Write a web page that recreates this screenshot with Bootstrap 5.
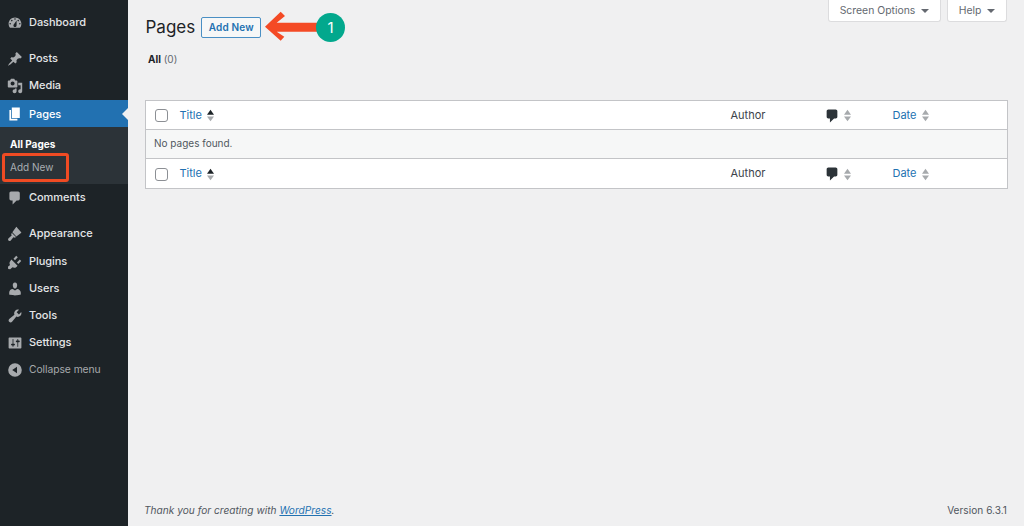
<!DOCTYPE html>
<html lang="en">
<head>
<meta charset="utf-8">
<title>Pages</title>
<link href="https://cdn.jsdelivr.net/npm/bootstrap@5.3.0/dist/css/bootstrap.min.css" rel="stylesheet">
<style>
html,body{height:100%;overflow:hidden}
body{background:#f0f0f1;color:#3c434a;font-family:Inter,"Liberation Sans",sans-serif;font-size:11px;width:1024px;height:526px;position:relative}
.wp-shell{height:526px}
.wp-side{width:128px;background:#1d2327;color:#f0f0f1;padding-top:9px;flex:none}
.wp-item{height:27px;padding-left:7px;gap:6px;color:#e4e6e7;font-size:11px;font-weight:500;letter-spacing:-.05px;position:relative}
.wp-item svg{width:16px;height:16px;flex:none;fill:#a7aaad}
.wp-gap{margin-top:9px}
.wp-gap1{margin-top:1px}
.wp-active{background:#2271b1;color:#fff;padding-top:1px}
.wp-active svg{fill:#fff}
.wp-active::after{content:"";position:absolute;right:0;top:8px;border:6px solid transparent;border-right-color:#f0f0f1;border-left:0}
.wp-sub{background:#2c3338;height:57px;padding:7px 0 0 10px;font-size:10px;color:#a9aeb3}
.wp-sub-on{color:#fff;font-weight:700;height:22px;line-height:21px}
.wp-sub-off{height:22px;line-height:22px}
.wp-collapse{color:#a7aaad;font-weight:400;font-size:10.3px}
.wp-main{padding:0 16px 0 17px;min-width:0;position:relative}
.wp-tabs{height:24px;gap:6px;margin-right:1px}
.wp-tab{background:#fff;border:1px solid #dcdcde;border-top:0;border-radius:0 0 3px 3px;height:22px;color:#646970;font-size:10.4px;gap:6px}
.wp-tab-a{width:113px}
.wp-tab-b{width:60px}
.wp-tri{border:4px solid transparent;border-top:4.5px solid #646970;border-bottom:0;width:0;height:0}
.wp-head{margin-top:-12px;height:30px;gap:6px;margin-left:.5px}
.wp-title{font-size:17px;font-weight:400;color:#1d2327;margin:0;line-height:1}
.wp-addbtn{height:21px;width:60px;padding:0;border:1px solid #4a8fc4;background:#f6f7f7;color:#2271b1;font-size:10px;font-weight:600;border-radius:2px;letter-spacing:.15px}
.wp-filter{margin-top:10px;margin-left:3px;font-size:10px;color:#646970;height:14px;line-height:14px}
.wp-filter b{color:#1d2327;font-weight:700}
.wp-table{margin:34px 0 0;border:1px solid #c3c4c7;width:863px;table-layout:fixed;background:#fff}
.wp-table th,.wp-table td{padding:0;border:0;background:transparent;box-shadow:none;font-weight:400;font-size:11px;vertical-align:middle;color:#3c434a}
.wp-table thead tr{height:29px}
.wp-table tbody tr{height:29px}
.wp-table tfoot tr{height:30px}
.wp-table thead th{border-bottom:1px solid #c3c4c7}
.wp-table tfoot th{border-top:1px solid #c3c4c7}
.wp-table tbody td{background:#f6f7f7;padding:0 0 2px 8px;font-size:10px;color:#50575e}
.wp-check{width:13px;height:13px;margin:1px 0 0 9px;background:#fff;border:1px solid #8c8f94;border-radius:3px;display:block}
.wp-link{color:#2271b1;text-decoration:none}
.wp-sort{display:inline-block;vertical-align:middle;margin-left:5px;width:7px}
.wp-sort svg{display:block;width:7px;height:13px}
.wp-com{width:14px;height:14px;fill:#2c3338;display:inline-block;vertical-align:middle;margin-left:-1px}
.wp-foot{left:144px;right:17px;bottom:8px;position:absolute;font-size:10.1px;letter-spacing:.03px;color:#50575e}
.wp-foot a{color:#2271b1}
.wp-redbox{position:absolute;left:2px;top:153px;width:67px;height:29px;border:3px solid #f04b23;border-radius:3px}
.wp-arrow{position:absolute;left:264px;top:10px;width:54px;height:33px}
.wp-num{position:absolute;left:316px;top:13px;width:29px;height:29px;border-radius:50%;background:#02a88d;color:#fff;font-size:15px;line-height:29px;text-align:center}
</style>
</head>
<body>
<div class="d-flex wp-shell">
  <nav class="wp-side">
    <div class="d-flex align-items-center wp-item"><svg viewBox="0 0 20 20"><path fill-rule="evenodd" d="M3.760 16h12.480c1.100-1.370 1.760-3.110 1.760-5 0-4.420-3.580-8-8-8s-8 3.580-8 8c0 1.890.660 3.630 1.760 5zM10 4c.550 0 1 .450 1 1s-.450 1-1 1-1-.450-1-1 .450-1 1-1zM6 6c.550 0 1 .450 1 1s-.450 1-1 1-1-.450-1-1 .450-1 1-1zm8 0c.550 0 1 .450 1 1s-.450 1-1 1-1-.450-1-1 .450-1 1-1zm-5.370 5.550L12 7v6c0 1.100-.9 2-2 2s-2-.9-2-2c0-.570.240-1.080.630-1.450zM4 10c.550 0 1 .450 1 1s-.450 1-1 1-1-.450-1-1 .450-1 1-1zm12 0c.550 0 1 .450 1 1s-.450 1-1 1-1-.450-1-1 .450-1 1-1z"/></svg>Dashboard</div>
    <div class="d-flex align-items-center wp-item wp-gap"><svg viewBox="0 0 20 20"><path d="M10.440 3.020l1.820-1.820 6.360 6.350-1.830 1.820c-1.050-.680-2.480-.570-3.410.360l-.750.750c-.920.930-1.040 2.350-.350 3.400l-1.830 1.820-2.410-2.410-2.800 2.790c-.420.420-3.380 2.710-3.800 2.290s1.860-3.390 2.280-3.810l2.790-2.790L4.100 9.360l1.830-1.820c1.050.690 2.480.570 3.400-.360l.750-.750c.930-.920 1.050-2.350.360-3.410z"/></svg>Posts</div>
    <div class="d-flex align-items-center wp-item"><svg viewBox="0 0 20 20"><path fill-rule="evenodd" d="M13 11V4c0-.550-.450-1-1-1h-1.670L9 1H5L3.670 3H2c-.550 0-1 .450-1 1v7c0 .550.450 1 1 1h10c.550 0 1-.450 1-1zM7 4.500c1.380 0 2.500 1.120 2.500 2.500S8.380 9.500 7 9.500 4.500 8.380 4.500 7 5.620 4.500 7 4.500zM14 6h5v10.500c0 1.380-1.120 2.500-2.500 2.500S14 17.880 14 16.500s1.120-2.500 2.500-2.500c.170 0 .340.020.500.050V9h-3V6zm-4 8.050V13h2v3.500c0 1.380-1.120 2.500-2.500 2.500S7 17.880 7 16.500 8.120 14 9.500 14c.170 0 .340.020.500.050z"/></svg>Media</div>
    <div class="d-flex align-items-center wp-item wp-active wp-gap1"><svg viewBox="0 0 20 20"><path d="M6 15V2h10v13H6zm-1 1h8v2H3V5h2v11z"/></svg>Pages</div>
    <div class="wp-sub">
      <div class="wp-sub-on">All Pages</div>
      <div class="wp-sub-off">Add New</div>
    </div>
    <div class="d-flex align-items-center wp-item"><svg viewBox="0 0 20 20"><path d="M5 2h9c1.100 0 2 .9 2 2v7c0 1.100-.9 2-2 2h-2l-5 5v-5H5c-1.100 0-2-.9-2-2V4c0-1.100.9-2 2-2z"/></svg>Comments</div>
    <div class="d-flex align-items-center wp-item wp-gap"><svg viewBox="0 0 20 20"><path d="M13 2.500l5 5.500-.5.700-5.800 4.300-5-5.200 4.300-5.800.9-1.200zM6.200 8.600l5 5.100-1.200 1-2-.6-3.300 3.900c-.8.800-2.200.900-2.900.2-.7-.7-.6-2 .2-2.800l3.800-3.400-.6-2z"/></svg>Appearance</div>
    <div class="d-flex align-items-center wp-item wp-gap1"><svg viewBox="0 0 20 20"><path d="M11.500 2.300l2 1.700-3.500 3.700-1.900-1.800zM16 7l1.800 1.900-3.700 3.500-1.700-1.900zM5.500 7l7.700 7.700-1.400 1.400c-1.400 1.300-3.400 1.500-4.900.6L4 19l-2.500-.2L1.200 16l2.600-2.400c-1-1.500-.9-3.600.4-5z"/></svg>Plugins</div>
    <div class="d-flex align-items-center wp-item"><svg viewBox="0 0 20 20"><path d="M10 9.250c-2.270 0-2.730-3.440-2.730-3.440C7 4.020 7.820 2 9.970 2c2.160 0 2.980 2.020 2.710 3.810 0 0-.410 3.440-2.680 3.440zm0 2.570L12.720 10c2.390 0 4.520 2.330 4.520 4.530v2.490s-3.650 1.130-7.240 1.130c-3.650 0-7.240-1.130-7.240-1.130v-2.490c0-2.250 1.940-4.480 4.470-4.480z"/></svg>Users</div>
    <div class="d-flex align-items-center wp-item"><svg viewBox="0 0 20 20"><path d="M16.680 9.770c-1.340 1.340-3.300 1.670-4.950.990l-5.410 6.520c-.990.990-2.590.990-3.570 0-.990-.980-.990-2.580 0-3.570l6.520-5.420c-.680-1.650-.350-3.610.990-4.950 1.280-1.280 3.120-1.620 4.720-1.060l-2.890 2.890 2.820 2.820 2.890-2.890c.560 1.600.220 3.440-1.060 4.720z"/></svg>Tools</div>
    <div class="d-flex align-items-center wp-item"><svg viewBox="0 0 20 20"><path fill-rule="evenodd" d="M18 16V4c0-.550-.450-1-1-1H3c-.550 0-1 .450-1 1v12c0 .550.450 1 1 1h14c.550 0 1-.450 1-1zM8 11h1c.550 0 1 .450 1 1s-.450 1-1 1H8v1.500c0 .280-.220.500-.500.500s-.500-.220-.500-.500V13H6c-.550 0-1-.450-1-1s.450-1 1-1h1V5.500c0-.280.220-.500.500-.500s.500.220.500.500V11zm5-2h-1c-.550 0-1-.450-1-1s.450-1 1-1h1V5.500c0-.280.220-.500.500-.500s.500.220.500.500V7h1c.550 0 1 .450 1 1s-.450 1-1 1h-1v5.500c0 .280-.220.500-.500.500s-.500-.220-.500-.500V9z"/></svg>Settings</div>
    <div class="d-flex align-items-center wp-item wp-collapse"><svg viewBox="0 0 20 20"><path fill-rule="evenodd" d="M10 1.500a8.500 8.500 0 1 0 0 17 8.500 8.500 0 0 0 0-17zM12.500 6v8L6.500 10z"/></svg>Collapse menu</div>
  </nav>
  <main class="wp-main flex-grow-1">
    <div class="d-flex justify-content-end wp-tabs">
      <div class="d-flex align-items-center justify-content-center wp-tab wp-tab-a">Screen Options <span class="wp-tri"></span></div>
      <div class="d-flex align-items-center justify-content-center wp-tab wp-tab-b">Help <span class="wp-tri"></span></div>
    </div>
    <div class="d-flex align-items-center wp-head">
      <h1 class="wp-title">Pages</h1>
      <button type="button" class="btn wp-addbtn">Add New</button>
    </div>
    <div class="wp-filter"><b>All</b> (0)</div>
    <table class="table wp-table">
      <colgroup><col style="width:34px"><col style="width:551px"><col style="width:95px"><col style="width:67px"><col></colgroup>
      <thead>
        <tr>
          <th><span class="wp-check"></span></th>
          <th><a class="wp-link" href="#">Title</a><span class="wp-sort"><svg viewBox="0 0 8 13"><path d="M4 0l4 5.500H0z" fill="#1d2327"/><path d="M4 13l4-5.500H0z" fill="#a7aaad"/></svg></span></th>
          <th>Author</th>
          <th><svg class="wp-com" viewBox="2 1.500 15 17"><path d="M5 2h9c1.100 0 2 .9 2 2v7c0 1.100-.9 2-2 2h-2l-5 5v-5H5c-1.100 0-2-.9-2-2V4c0-1.100.9-2 2-2z"/></svg><span class="wp-sort"><svg viewBox="0 0 8 13"><path d="M4 0l4 5.500H0zM4 13l4-5.500H0z" fill="#a7aaad"/></svg></span></th>
          <th><a class="wp-link" href="#">Date</a><span class="wp-sort"><svg viewBox="0 0 8 13"><path d="M4 0l4 5.500H0zM4 13l4-5.500H0z" fill="#a7aaad"/></svg></span></th>
        </tr>
      </thead>
      <tbody><tr><td colspan="5">No pages found.</td></tr></tbody>
      <tfoot>
        <tr>
          <th><span class="wp-check"></span></th>
          <th><a class="wp-link" href="#">Title</a><span class="wp-sort"><svg viewBox="0 0 8 13"><path d="M4 0l4 5.500H0z" fill="#1d2327"/><path d="M4 13l4-5.500H0z" fill="#a7aaad"/></svg></span></th>
          <th>Author</th>
          <th><svg class="wp-com" viewBox="2 1.500 15 17"><path d="M5 2h9c1.100 0 2 .9 2 2v7c0 1.100-.9 2-2 2h-2l-5 5v-5H5c-1.100 0-2-.9-2-2V4c0-1.100.9-2 2-2z"/></svg><span class="wp-sort"><svg viewBox="0 0 8 13"><path d="M4 0l4 5.500H0zM4 13l4-5.500H0z" fill="#a7aaad"/></svg></span></th>
          <th><a class="wp-link" href="#">Date</a><span class="wp-sort"><svg viewBox="0 0 8 13"><path d="M4 0l4 5.500H0zM4 13l4-5.500H0z" fill="#a7aaad"/></svg></span></th>
        </tr>
      </tfoot>
    </table>
  </main>
</div>
<div class="d-flex justify-content-between wp-foot"><i>Thank you for creating with <a href="#">WordPress</a>.</i><span>Version 6.3.1</span></div>
<div class="wp-redbox"></div>
<svg class="wp-arrow" viewBox="264 10 54 33"><path d="M265 26.700L280.700 11.700 285 16 276.700 22.700H317V31.700H276.700L284.300 36.700 280.700 40.700z" fill="#f44a25"/></svg>
<div class="wp-num">1</div>
<script src="https://cdn.jsdelivr.net/npm/bootstrap@5.3.0/dist/js/bootstrap.bundle.min.js"></script>
</body>
</html>
